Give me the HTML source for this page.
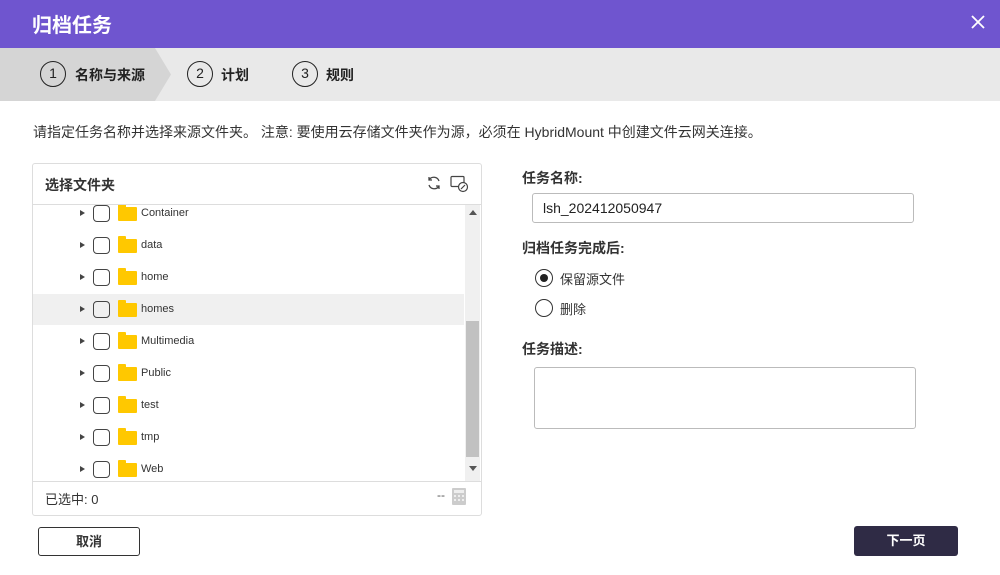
<!DOCTYPE html>
<html><head><meta charset="utf-8"><style>
*{margin:0;padding:0;box-sizing:border-box}
body{width:1000px;height:575px;overflow:hidden;background:#fff;font-family:"Liberation Sans","Noto Sans CJK SC",sans-serif;color:#222;position:relative}
.abs{position:absolute}
.hdr{left:0;top:0;width:1000px;height:48px;background:#6f55cf}
.hdr .t{left:32px;top:9px;color:#fff;font-size:20px;font-weight:bold}
.steps{left:0;top:48px;width:1000px;height:53px;background:#e9e9e9}
.circ{width:26px;height:26px;border:1.5px solid #222;border-radius:50%;font-size:14px;text-align:center;line-height:23px}
.sl{font-size:14px;font-weight:bold}
.row{left:33px;width:431px;height:32px}
.tri{left:47px;top:13px;width:0;height:0;border-left:5px solid #444;border-top:3.5px solid transparent;border-bottom:3.5px solid transparent}
.cb{left:60px;top:8px;width:17px;height:17px;border:1.5px solid #444;border-radius:4px}
.fd{left:85px;top:10px;width:19px;height:14px;background:#ffc800;border-radius:1px}
.fd:before{content:"";position:absolute;left:0;top:-3px;width:8px;height:4px;background:#ffc800;border-radius:1px 1px 0 0}
.nm{left:108px;top:10px;font-size:11px;color:#333}
.lbl{font-size:14px;font-weight:bold;color:#333}
</style></head><body>
<div class="abs hdr"><div class="abs t">归档任务</div>
<svg class="abs" style="left:971px;top:15px" width="14" height="14"><path d="M1 1L13 13M13 1L1 13" stroke="#fff" stroke-width="1.8"/></svg></div>
<div class="abs steps">
<svg class="abs" style="left:0;top:0" width="172" height="53"><path d="M0 0H155L171 26.5L155 53H0Z" fill="#d5d5d5"/></svg>
<div class="abs circ" style="left:40px;top:13px">1</div><div class="abs sl" style="left:75px;top:17px">名称与来源</div>
<div class="abs circ" style="left:187px;top:13px">2</div><div class="abs sl" style="left:221px;top:17px">计划</div>
<div class="abs circ" style="left:292px;top:13px">3</div><div class="abs sl" style="left:326px;top:17px">规则</div>
</div>
<div class="abs" style="left:33px;top:122px;font-size:14px;color:#333">请指定任务名称并选择来源文件夹。 注意: 要使用云存储文件夹作为源，必须在 HybridMount 中创建文件云网关连接。</div>
<div class="abs" style="left:32px;top:163px;width:450px;height:353px;border:1px solid #ddd;border-radius:3px"></div>
<div class="abs lbl" style="left:45px;top:175px">选择文件夹</div>
<svg class="abs" style="left:426px;top:175px" width="16" height="16" fill="none" stroke="#444" stroke-width="1.3"><path d="M13 6A5.5 5.5 0 0 0 3 5M3 2V5H6M3 10A5.5 5.5 0 0 0 13 11M13 14V11H10"/></svg>
<svg class="abs" style="left:450px;top:175px" width="19" height="18" fill="none" stroke="#444" stroke-width="1.2"><rect x="1" y="1.5" width="13" height="10" rx="1"/><circle cx="13" cy="12" r="4.5" fill="#fff"/><path d="M11 14L15 10"/></svg>
<div class="abs" style="left:33px;top:204px;width:448px;height:1px;background:#ddd"></div>
<div class="abs" style="left:33px;top:294px;width:431px;height:31px;background:#f0f0f0"></div>
<div class="abs" style="left:465px;top:205px;width:15px;height:276px;background:#f0f0f0"></div>
<div class="abs" style="left:466px;top:321px;width:13px;height:136px;background:#c1c1c1"></div>
<div class="abs" style="left:469px;top:210px;border-bottom:5px solid #555;border-left:4px solid transparent;border-right:4px solid transparent"></div>
<div class="abs" style="left:469px;top:466px;border-top:5px solid #555;border-left:4px solid transparent;border-right:4px solid transparent"></div>
<div class="abs" style="left:33px;top:205px;width:431px;height:276px;overflow:hidden">
<div class="abs row" style="left:0;top:-8px"><div class="abs tri"></div><div class="abs cb"></div><div class="abs fd"></div><div class="abs nm">Container</div></div>
<div class="abs row" style="left:0;top:24px"><div class="abs tri"></div><div class="abs cb"></div><div class="abs fd"></div><div class="abs nm">data</div></div>
<div class="abs row" style="left:0;top:56px"><div class="abs tri"></div><div class="abs cb"></div><div class="abs fd"></div><div class="abs nm">home</div></div>
<div class="abs row" style="left:0;top:88px"><div class="abs tri"></div><div class="abs cb"></div><div class="abs fd"></div><div class="abs nm">homes</div></div>
<div class="abs row" style="left:0;top:120px"><div class="abs tri"></div><div class="abs cb"></div><div class="abs fd"></div><div class="abs nm">Multimedia</div></div>
<div class="abs row" style="left:0;top:152px"><div class="abs tri"></div><div class="abs cb"></div><div class="abs fd"></div><div class="abs nm">Public</div></div>
<div class="abs row" style="left:0;top:184px"><div class="abs tri"></div><div class="abs cb"></div><div class="abs fd"></div><div class="abs nm">test</div></div>
<div class="abs row" style="left:0;top:216px"><div class="abs tri"></div><div class="abs cb"></div><div class="abs fd"></div><div class="abs nm">tmp</div></div>
<div class="abs row" style="left:0;top:248px"><div class="abs tri"></div><div class="abs cb"></div><div class="abs fd"></div><div class="abs nm">Web</div></div>
</div>
<div class="abs" style="left:33px;top:481px;width:448px;height:1px;background:#ddd"></div>
<div class="abs" style="left:45px;top:489px;font-size:13px;color:#333">已选中: 0</div>
<div class="abs" style="left:437px;top:488px;font-size:12px;color:#555">--</div>
<svg class="abs" style="left:452px;top:488px" width="14" height="17" fill="#ccc"><rect x="0" y="0" width="14" height="17" rx="1"/><rect x="2" y="2" width="10" height="3" fill="#eee"/><g fill="#eee"><rect x="2" y="7" width="2" height="2"/><rect x="6" y="7" width="2" height="2"/><rect x="10" y="7" width="2" height="2"/><rect x="2" y="11" width="2" height="2"/><rect x="6" y="11" width="2" height="2"/><rect x="10" y="11" width="2" height="2"/></g></svg>
<div class="abs lbl" style="left:522px;top:168px">任务名称:</div>
<div class="abs" style="left:532px;top:193px;width:382px;height:30px;border:1px solid #bbb;border-radius:3px;font-size:14px;padding:6px 10px;color:#222">lsh_202412050947</div>
<div class="abs lbl" style="left:522px;top:238px">归档任务完成后:</div>
<div class="abs" style="left:535px;top:269px;width:18px;height:18px;border:1.5px solid #333;border-radius:50%"><div class="abs" style="left:3.5px;top:3.5px;width:8px;height:8px;background:#222;border-radius:50%"></div></div>
<div class="abs" style="left:560px;top:269px;font-size:13px;color:#333">保留源文件</div>
<div class="abs" style="left:535px;top:299px;width:18px;height:18px;border:1.5px solid #333;border-radius:50%"></div>
<div class="abs" style="left:560px;top:299px;font-size:13px;color:#333">删除</div>
<div class="abs lbl" style="left:522px;top:339px">任务描述:</div>
<div class="abs" style="left:534px;top:367px;width:382px;height:62px;border:1px solid #bbb;border-radius:3px"></div>
<div class="abs" style="left:38px;top:527px;width:102px;height:29px;border:1px solid #333;border-radius:3px;text-align:center;line-height:27px;font-size:13px;font-weight:bold;color:#333">取消</div>
<div class="abs" style="left:854px;top:526px;width:104px;height:30px;background:#2f2b45;border-radius:3px;text-align:center;line-height:30px;font-size:13px;font-weight:bold;color:#fff">下一页</div>
</body></html>
